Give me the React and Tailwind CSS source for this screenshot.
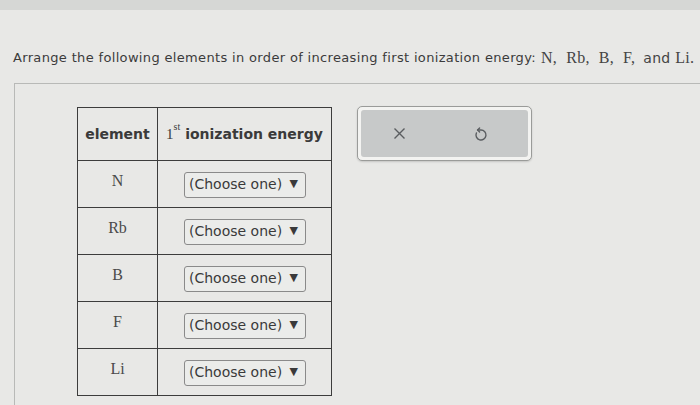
import React from "react";

const rows = ["N", "Rb", "B", "F", "Li"];

function ChooseOne() {
  return (
    <div className="flex items-center h-[26px] w-[122px] border border-[#8a8a8a] rounded-[3px] bg-[#ebecea] pl-[4px] pr-[7px] text-[14px] text-[#3a3a3a] justify-between">
      <span>(Choose one)</span>
      <span className="text-[11px]">▼</span>
    </div>
  );
}

export default function App() {
  return (
    <div
      className="w-[700px] h-[405px] bg-[#e8e8e6] overflow-hidden flex flex-col"
      style={{ fontFamily: '"DejaVu Sans", "Liberation Sans", sans-serif' }}
    >
      {/* top strip */}
      <div className="h-[10px] bg-[#d6d7d5] shrink-0" />

      {/* question */}
      <div className="pl-[13px] pt-[38px] h-[73px] text-[13px] text-[#3b3b3b] whitespace-nowrap tracking-[0.34px] flex items-start">
        <span>Arrange the following elements in order of increasing first ionization energy:</span>
        <span
          className="ml-[5px] text-[16px] tracking-[0.3px] text-[#444] -mt-[2px]"
          style={{ fontFamily: '"Liberation Serif", serif' }}
        >
          N<span className="mr-[9px]">,</span>Rb<span className="mr-[9px]">,</span>B<span className="mr-[9px]">,</span>F<span className="mr-[8px]">,</span>
          <span style={{ fontFamily: '"DejaVu Sans", sans-serif' }} className="text-[14px]">and </span>Li.
        </span>
      </div>

      {/* answer area */}
      <div className="ml-[14px] flex-1 border-l border-t border-[#b8b9b7] pl-[62px] pt-[23px] flex items-start gap-[25px]">
        <table className="border-collapse border-[1.5px] border-[#3c3c3c] text-[#3a3a3a]">
          <thead>
            <tr className="h-[53px]">
              <th className="w-[80px] border border-[#3c3c3c] font-bold text-[14px]">element</th>
              <th className="w-[174px] border border-[#3c3c3c] font-bold text-[14px] text-center">
                <span style={{ fontFamily: '"Liberation Serif", serif' }} className="font-normal text-[15px]">
                  1<sup className="text-[10px] -top-[9px] relative">st</sup>
                </span>{" "}
                ionization energy
              </th>
            </tr>
          </thead>
          <tbody>
            {rows.map((r) => (
              <tr key={r} className="h-[47px]">
                <td
                  className="border border-[#3c3c3c] text-center text-[16px] text-[#4a4a4a] pb-[6px]"
                  style={{ fontFamily: '"Liberation Serif", serif' }}
                >
                  {r}
                </td>
                <td className="border border-[#3c3c3c]">
                  <div className="flex justify-center pl-[1px] pt-[1px]">
                    <ChooseOne />
                  </div>
                </td>
              </tr>
            ))}
          </tbody>
        </table>

        <div className="-mt-[1px] p-[3px] border border-[#9a9b99] rounded-[5px] bg-[#f3f3f1] shadow-[0_1px_2px_rgba(0,0,0,0.15)]">
          <div className="w-[167px] h-[47px] bg-[#c7c9c9] rounded-[3px] flex items-center pl-[32px] gap-[68px]">
            <svg width="13" height="13" viewBox="0 0 13 13" fill="none" stroke="#5a5d60" strokeWidth="1.4">
              <path d="M1.5 1.5 L11.5 11.5 M11.5 1.5 L1.5 11.5" />
            </svg>
            <svg width="14" height="17" viewBox="0 0 14 17" fill="none" stroke="#5a5d60" strokeWidth="1.4" strokeLinecap="round" strokeLinejoin="round">
              <path d="M2.4 8 A5 5 0 1 0 7 5 L3.6 5" />
              <path d="M5.6 3 L3.6 5 L5.6 7" />
            </svg>
          </div>
        </div>
      </div>
    </div>
  );
}
